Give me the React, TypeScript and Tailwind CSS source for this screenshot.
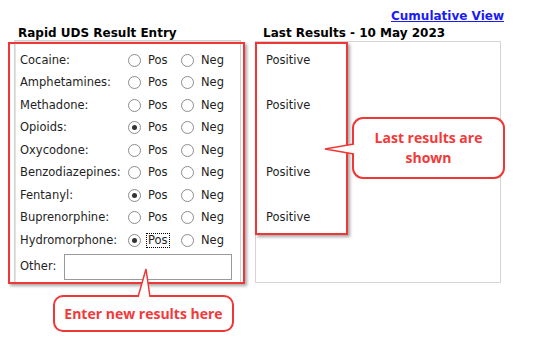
import React from 'react';

const drugs = [
  { name: 'Cocaine', value: '', last: 'Positive' },
  { name: 'Amphetamines', value: '', last: '' },
  { name: 'Methadone', value: '', last: 'Positive' },
  { name: 'Opioids', value: 'pos', last: '' },
  { name: 'Oxycodone', value: '', last: '' },
  { name: 'Benzodiazepines', value: '', last: 'Positive' },
  { name: 'Fentanyl', value: 'pos', last: '' },
  { name: 'Buprenorphine', value: '', last: 'Positive' },
  { name: 'Hydromorphone', value: 'pos', last: '', focus: true },
];

function Radio({ checked }: { checked?: boolean }) {
  return (
    <span className="flex h-[13px] w-[13px] shrink-0 items-center justify-center rounded-full border border-[#8c8c8c] bg-white">
      {checked && <span className="h-[5px] w-[5px] rounded-full bg-[#333]" />}
    </span>
  );
}

function Option({ label, checked, focus }: { label: string; checked?: boolean; focus?: boolean }) {
  return (
    <label className="flex items-center">
      <Radio checked={checked} />
      <span
        className={`ml-[5px] px-[1px] leading-[13px] ${
          focus ? 'border border-dotted border-black' : 'border border-transparent'
        }`}
      >
        {label}
      </span>
    </label>
  );
}

export default function App() {
  return (
    <div className="relative h-[346px] w-[544px] overflow-hidden bg-white text-[11.5px] text-[#1e1e24] [font-family:'DejaVu_Sans',Verdana,sans-serif]">
      <div className="flex gap-[14px] pl-[14px] pt-[8px]">
        {/* entry column */}
        <div className="w-[227px]">
          <div className="h-[16px]" />
          <div className="h-[16px] pl-[4px] text-[12px] font-bold leading-[19px] text-black">Rapid UDS Result Entry</div>
          <div className="h-[243px] border border-[#d2d2d2] shadow-[inset_1px_1px_0_#e4e4e4]">
            <div className="flex flex-col pt-[8px]">
              {drugs.map((d) => (
                <div key={d.name} className="flex h-[22.5px] items-center pl-[5px]">
                  <span className="w-[108px] whitespace-nowrap">{d.name}:</span>
                  <div className="w-[53px]">
                    <Option label="Pos" checked={d.value === 'pos'} focus={d.focus} />
                  </div>
                  <Option label="Neg" checked={d.value === 'neg'} />
                </div>
              ))}
              <div className="mt-[2px] flex items-center pl-[5px]">
                <span className="w-[44px]">Other:</span>
                <input className="h-[26px] w-[168px] border border-[#9a9a9a] bg-white outline-none" />
              </div>
            </div>
          </div>
        </div>

        {/* last results column */}
        <div className="w-[246px]">
          <div className="flex h-[16px] justify-end">
            <a href="#" className="mr-[-3px] text-[12px] font-bold leading-[17px] text-[#1b1bf5] underline">
              Cumulative View
            </a>
          </div>
          <div className="h-[17px] pl-[8px] text-[12px] font-bold leading-[19px] text-black">Last Results - 10 May 2023</div>
          <div className="h-[242px] border border-[#d6d6d6]">
            <div className="flex flex-col pt-[7px]">
              {drugs.map((d) => (
                <div key={d.name} className="flex h-[22.5px] items-center pl-[10px]">
                  {d.last}
                </div>
              ))}
            </div>
          </div>
        </div>
      </div>

      {/* annotation boxes */}
      <div className="absolute left-[8px] top-[42px] h-[242px] w-[237px] border-2 border-[#f03737] shadow-[2px_2px_3px_rgba(0,0,0,0.35)]" />
      <div className="absolute left-[255px] top-[42px] h-[193px] w-[93px] border-2 border-[#f03737] shadow-[2px_2px_3px_rgba(0,0,0,0.35)]" />

      {/* callout: last results */}
      <div className="absolute left-[352px] top-[117px] flex h-[62px] w-[153px] flex-col items-center justify-center rounded-[11px] border-2 border-[#f03737] bg-white text-[14px] font-bold leading-[20px] text-[#f23a3a] [font-family:'Open_Sans',sans-serif]">
        <span>Last results are</span>
        <span>shown</span>
      </div>
      <svg className="absolute left-[323px] top-[142px]" width="34" height="14" viewBox="0 0 34 14">
        <polygon points="2,7 31,2 31,12" fill="white" />
        <polyline points="31,2 2,7 31,12" fill="none" stroke="#f03737" strokeWidth="1.5" />
      </svg>

      {/* callout: new results */}
      <div className="absolute left-[53px] top-[295px] flex h-[37px] w-[181px] items-center justify-center rounded-[10px] border-2 border-[#f03737] bg-white text-[14px] font-bold text-[#f23a3a] [font-family:'Open_Sans',sans-serif]">
        Enter new results here
      </div>
      <svg className="absolute left-[134px] top-[267px]" width="20" height="32" viewBox="0 0 20 32">
        <polygon points="12,2 4,30 16,30" fill="white" />
        <polyline points="4,30 12,2 16,30" fill="none" stroke="#f03737" strokeWidth="1.5" />
      </svg>
    </div>
  );
}
